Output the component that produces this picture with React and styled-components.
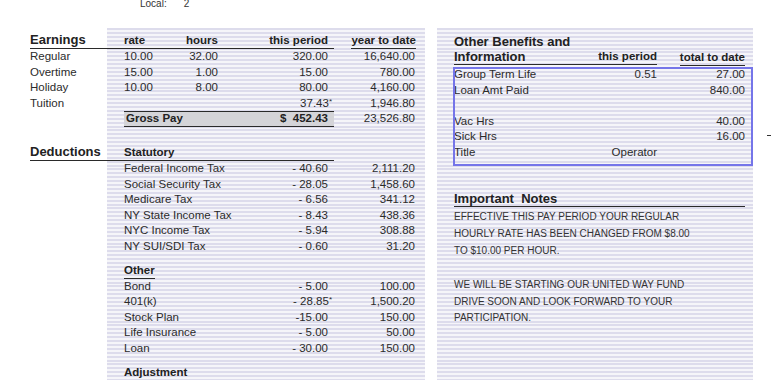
import styled, { createGlobalStyle } from "styled-components";

const ROW = 15.6;

const stripes =
  "repeating-linear-gradient(to bottom, #dddcec 0px, #dddcec 2px, #f5f5f9 2px, #f5f5f9 3.9px)";

const GlobalStyle = createGlobalStyle`
  html, body { margin: 0; padding: 0; background: #fff; }
  body {
    font-family: "Liberation Sans", Arial, Helvetica, sans-serif;
    color: #2b2b2b;
    overflow: hidden;
  }
`;

const Page = styled.div`
  height: 380px;
  overflow: hidden;
  padding-left: 30px;
`;

const TopLine = styled.div`
  margin-top: -1px;
  height: 10px;
  line-height: 10px;
  font-size: 10px;
  padding-left: 110px;
  display: flex;
  gap: 17px;
  color: #333;
`;

const Sheet = styled.div`
  margin-top: 19px;
  display: grid;
  grid-template-columns: 395px 316px 1fr;
  column-gap: 12px;
  align-items: start;
`;

const LeftBlock = styled.section`
  height: 362px;
  box-sizing: border-box;
  padding-top: 5px;
  background: linear-gradient(#fff, #fff) 0 0 / 77px 100% no-repeat, ${stripes};
`;

const Row = styled.div`
  display: grid;
  grid-template-columns: 94px 50px 44px 116px 82px;
  height: ${ROW}px;
  line-height: ${ROW}px;
  font-size: 11.5px;
  white-space: nowrap;
  margin-top: ${(p) => p.$gap || 0}px;
`;

const HeadRow = styled(Row)`
  height: 16px;
  line-height: 14.5px;
  font-weight: bold;
  color: #222;
`;

const Cell = styled.div`
  grid-column: ${(p) => p.$col || "auto"};
  text-align: ${(p) => (p.$right ? "right" : "left")};
  padding-right: ${(p) => p.$pad || 0}px;
`;

const HeadCell = styled(Cell)`
  height: 16px;
  box-sizing: border-box;
  border-bottom: ${(p) => (p.$line ? "1.5px solid #2a2a2a" : "none")};
  font-size: ${(p) => (p.$big ? "13px" : "11.5px")};
`;

const Underlined = styled.span`
  display: inline-block;
  line-height: 13.5px;
  border-bottom: 1.5px solid #2a2a2a;
`;

const Star = styled.span`
  font-size: 8px;
  vertical-align: top;
  line-height: 12px;
  margin-right: -4px;
`;

const GrossBox = styled.div`
  grid-column: 2 / 5;
  display: flex;
  justify-content: space-between;
  box-sizing: border-box;
  height: ${ROW}px;
  line-height: 12.6px;
  padding: 0 6px 0 2px;
  background: #d4d4d8;
  border-top: 1.5px solid #2a2a2a;
  border-bottom: 1.5px solid #2a2a2a;
  font-weight: bold;
  color: #222;
`;

const Spacer = styled.div`
  height: ${(p) => p.$h}px;
`;

const SubHead = styled(Row)`
  font-weight: bold;
  color: #222;
  line-height: normal;
  padding-top: 1px;
  box-sizing: border-box;
`;

const RightBlock = styled.section`
  height: 362px;
  box-sizing: border-box;
  padding: 6px 8px 0 17px;
  background: ${stripes};
`;

const BenefitGrid = styled.div`
  display: grid;
  grid-template-columns: 1fr 84px 88px;
  font-size: 11.5px;
  white-space: nowrap;
`;

const BenefitHead = styled(BenefitGrid)`
  font-weight: bold;
  color: #222;
  line-height: 15px;
  align-items: end;
`;

const BenefitHeadCell = styled.div`
  text-align: ${(p) => (p.$right ? "right" : "left")};
  font-size: ${(p) => (p.$big ? "13px" : "11.5px")};
  border-bottom: ${(p) => (p.$line ? "1.5px solid #2a2a2a" : "none")};
  height: ${(p) => (p.$big ? "30px" : "15px")};
  box-sizing: content-box;
`;

const HeadUnderline = styled.span`
  display: inline-block;
  line-height: 15px;
  border-bottom: 1.5px solid #2a2a2a;
`;

const BenefitRows = styled.div`
  position: relative;
  padding-top: 2px;
`;

const BenefitRow = styled(BenefitGrid)`
  height: 15.55px;
  line-height: 15.55px;
`;

const Highlight = styled.div`
  position: absolute;
  top: 2px;
  left: -1.5px;
  right: -8px;
  bottom: -6px;
  border: 2px solid #7575e9;
  pointer-events: none;
`;

const NotesTitle = styled.div`
  margin-top: 30.5px;
  font-size: 13px;
  font-weight: bold;
  line-height: 15px;
  color: #222;
  white-space: pre;
  border-bottom: 1.5px solid #2a2a2a;
`;

const NotesBody = styled.div`
  padding-top: 2.5px;
`;

const NotesPara = styled.p`
  margin: 0 0 17.5px;
  font-size: 10px;
  line-height: 16.7px;
  color: #333;
  white-space: nowrap;
`;

const Tick = styled.div`
  margin: 107px 0 0 2px;
  width: 6px;
  height: 1px;
  background: #333;
`;

const earnings = [
  { name: "Regular", rate: "10.00", hours: "32.00", period: "320.00", ytd: "16,640.00" },
  { name: "Overtime", rate: "15.00", hours: "1.00", period: "15.00", ytd: "780.00" },
  { name: "Holiday", rate: "10.00", hours: "8.00", period: "80.00", ytd: "4,160.00" },
  { name: "Tuition", rate: "", hours: "", period: "37.43", star: true, ytd: "1,946.80" },
];

const statutory = [
  ["Federal Income Tax", "- 40.60", "2,111.20"],
  ["Social Security Tax", "- 28.05", "1,458.60"],
  ["Medicare Tax", "- 6.56", "341.12"],
  ["NY State Income Tax", "- 8.43", "438.36"],
  ["NYC Income Tax", "- 5.94", "308.88"],
  ["NY SUI/SDI Tax", "- 0.60", "31.20"],
];

const other = [
  ["Bond", "- 5.00", "100.00"],
  ["401(k)", "- 28.85", "1,500.20", true],
  ["Stock Plan", "-15.00", "150.00"],
  ["Life Insurance", "- 5.00", "50.00"],
  ["Loan", "- 30.00", "150.00"],
];

const benefits = [
  ["Group Term Life", "0.51", "27.00"],
  ["Loan Amt Paid", "", "840.00"],
  ["", "", ""],
  ["Vac  Hrs", "", "40.00"],
  ["Sick Hrs", "", "16.00"],
  ["Title", "Operator", ""],
];

const DeductionRow = ({ name, amount, ytd, star }) => (
  <Row>
    <Cell $col="2 / 4">{name}</Cell>
    <Cell $right $pad={6}>
      {amount}
      {star && <Star>*</Star>}
    </Cell>
    <Cell $right $pad={1}>{ytd}</Cell>
  </Row>
);

const App = () => {
  return (
    <Page>
      <GlobalStyle />
      <TopLine>
        <span>Local:</span>
        <span>2</span>
      </TopLine>
      <Sheet>
        <LeftBlock>
          <HeadRow>
            <HeadCell $line $big>Earnings</HeadCell>
            <HeadCell $line>rate</HeadCell>
            <HeadCell $line $right>hours</HeadCell>
            <HeadCell $line $right $pad={6}>this period</HeadCell>
            <Cell $right $pad={0}>
              <Underlined>year to date</Underlined>
            </Cell>
          </HeadRow>
          {earnings.map((e) => (
            <Row key={e.name}>
              <Cell>{e.name}</Cell>
              <Cell>{e.rate}</Cell>
              <Cell $right>{e.hours}</Cell>
              <Cell $right $pad={6}>
                {e.period}
                {e.star && <Star>*</Star>}
              </Cell>
              <Cell $right $pad={1}>{e.ytd}</Cell>
            </Row>
          ))}
          <Row>
            <GrossBox>
              <span>Gross Pay</span>
              <span>$&nbsp; 452.43</span>
            </GrossBox>
            <Cell $right $pad={1}>23,526.80</Cell>
          </Row>
          <Spacer $h={18} />
          <HeadRow>
            <HeadCell $line $big>Deductions</HeadCell>
            <HeadCell $line $col="2 / 5">Statutory</HeadCell>
          </HeadRow>
          {statutory.map(([n, a, y]) => (
            <DeductionRow key={n} name={n} amount={a} ytd={y} />
          ))}
          <SubHead $gap={8.5}>
            <Cell $col="2 / 4">
              <Underlined>Other</Underlined>
            </Cell>
          </SubHead>
          {other.map(([n, a, y, s]) => (
            <DeductionRow key={n} name={n} amount={a} ytd={y} star={s} />
          ))}
          <SubHead $gap={8.5}>
            <Cell $col="2 / 4">
              <Underlined>Adjustment</Underlined>
            </Cell>
          </SubHead>
        </LeftBlock>

        <RightBlock>
          <BenefitHead>
            <BenefitHeadCell $big $line>
              Other Benefits and
              <br />
              Information
            </BenefitHeadCell>
            <BenefitHeadCell $right $line>this period</BenefitHeadCell>
            <BenefitHeadCell $right>
              <HeadUnderline>total to date</HeadUnderline>
            </BenefitHeadCell>
          </BenefitHead>
          <BenefitRows>
            {benefits.map(([n, p, t], i) => (
              <BenefitRow key={i}>
                <Cell>{n}</Cell>
                <Cell $right>{p}</Cell>
                <Cell $right>{t}</Cell>
              </BenefitRow>
            ))}
            <Highlight />
          </BenefitRows>
          <NotesTitle>{"Important  Notes"}</NotesTitle>
          <NotesBody>
            <NotesPara>
              EFFECTIVE THIS PAY PERIOD YOUR REGULAR
              <br />
              HOURLY RATE HAS BEEN CHANGED FROM $8.00
              <br />
              TO $10.00 PER HOUR.
            </NotesPara>
            <NotesPara>
              WE WILL BE STARTING OUR UNITED WAY FUND
              <br />
              DRIVE SOON AND LOOK FORWARD TO YOUR
              <br />
              PARTICIPATION.
            </NotesPara>
          </NotesBody>
        </RightBlock>

        <Tick />
      </Sheet>
    </Page>
  );
};

export default App;
